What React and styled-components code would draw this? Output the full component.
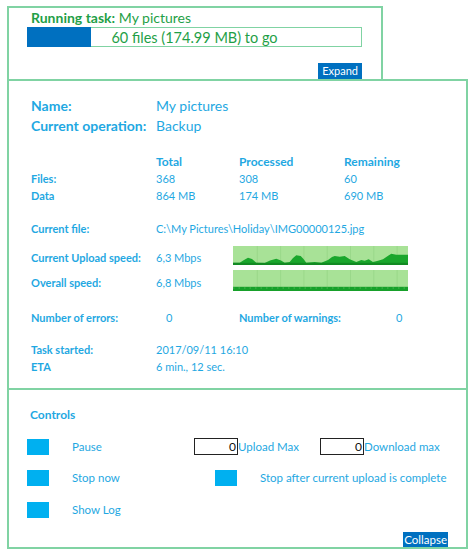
import styled, { createGlobalStyle } from 'styled-components';

const GlobalStyle = createGlobalStyle`
  html, body {
    margin: 0;
    padding: 0;
    background: #ffffff;
  }
  body {
    font-family: Lato, "Liberation Sans", sans-serif;
  }
`;

const GREEN_LINE = '#80d3a3';
const GREEN_TEXT = '#1f9f47';
const BLUE_TEXT = '#1fa8e2';
const DARK_BLUE = '#0070c0';

const Page = styled.div`
  padding: 6px 0 0 7px;
  width: 461px;
`;

/* top "running task" box */
const TaskBox = styled.div`
  box-sizing: border-box;
  width: 376px;
  height: 73px;
  border: 2px solid ${GREEN_LINE};
  border-bottom: none;
  padding: 1px 19px 0 18px;
  display: flex;
  flex-direction: column;
`;
const TaskTitle = styled.div`
  margin-left: 4px;
  font-size: 14px;
  line-height: 17px;
  color: ${GREEN_TEXT};
  > b {
    font-weight: 700;
  }
`;
const ProgressBar = styled.div`
  position: relative;
  box-sizing: border-box;
  margin-top: 1px;
  height: 20px;
  border: 1px solid ${GREEN_LINE};
  display: flex;
  align-items: center;
  justify-content: center;
  font-size: 14.5px;
  color: ${GREEN_TEXT};
`;
const ProgressFill = styled.div`
  position: absolute;
  left: -1px;
  top: -1px;
  bottom: -1px;
  background: ${DARK_BLUE};
`;
const ProgressLabel = styled.span`
  position: relative;
`;
const BlueButton = styled.button`
  margin-top: ${(p) => (p.$top ? `${p.$top}px` : 'auto')};
  align-self: flex-end;
  height: ${(p) => p.$h}px;
  padding: 0 ${(p) => p.$padX}px;
  border: none;
  background: ${DARK_BLUE};
  color: #ffffff;
  font-family: Lato, "Liberation Sans", sans-serif;
  font-size: ${(p) => p.$size}px;
  line-height: ${(p) => p.$h}px;
  cursor: pointer;
`;

/* main info panel */
const Panel = styled.div`
  box-sizing: border-box;
  width: 461px;
  border: 2px solid ${GREEN_LINE};
  border-top: ${(p) => (p.$noTop ? 'none' : `2px solid ${GREEN_LINE}`)};
  padding: ${(p) => p.$pad};
  display: flex;
  flex-direction: column;
  color: ${BLUE_TEXT};
`;

const BigRow = styled.div`
  display: grid;
  grid-template-columns: 125px 1fr;
  font-size: 14px;
  line-height: 20px;
  > b {
    font-weight: 700;
  }
`;

const Section = styled.div`
  margin-top: ${(p) => p.$top}px;
  display: flex;
  flex-direction: column;
`;

const SmallRow = styled.div`
  display: grid;
  grid-template-columns: ${(p) => p.$cols || '125px 83px 105px 1fr'};
  font-size: 11px;
  line-height: 17px;
  > b {
    font-weight: 700;
  }
`;
const HeadRow = styled(SmallRow)`
  font-size: 12px;
  font-weight: 700;
`;

const SpeedRow = styled.div`
  margin-top: ${(p) => p.$top}px;
  display: grid;
  grid-template-columns: 125px 77px 175px;
  align-items: center;
  font-size: 11px;
  line-height: 17px;
  > b {
    font-weight: 700;
    padding-top: 4px;
  }
  > span {
    padding-top: 4px;
  }
`;

const ChartSvg = styled.svg`
  display: block;
`;

function SpeedChart({ height, children }) {
  const lines = [1, 2, 3, 4, 5, 6, 7].map((k) => 1 + k * 23.3);
  return (
    <ChartSvg width="175" height={height} viewBox={`0 0 175 ${height}`}>
      <rect x="0" y="0" width="175" height={height} fill="#a8e297" />
      {lines.map((x) => (
        <line key={x} x1={x} y1="0" x2={x} y2={height} stroke="#97d686" strokeWidth="0.8" />
      ))}
      {children}
    </ChartSvg>
  );
}

const uploadPath =
  'M0 16.7 L6.7 16.7 L11 14 L15 11.7 L19 13 L23.3 16.7 L31.7 17 L37 14.5 L43.3 12.7 L48 14.5 L51.7 16.7 L56.7 16 ' +
  'L60 12 L63.3 9.3 L67.7 10 L70.5 13 L73.3 16.7 L81.7 16 L88.3 16.7 L95 14 L99 11 L101.7 10 L106.7 10.7 L111.7 10 ' +
  'L116.7 13.3 L123.3 16 L128.3 14 L131.7 14.7 L135.7 13.3 L140 16 L145 14.7 L150 13.3 L154 10.5 L158.3 7.7 ' +
  'L163.3 8.7 L175 8.7 L175 19 L0 19 Z';

/* controls */
const ControlsTitle = styled.div`
  margin-left: 3px;
  font-size: 12px;
  font-weight: 700;
  line-height: 17px;
`;
const ControlList = styled.div`
  margin-top: 15px;
  display: flex;
  flex-direction: column;
  gap: 16px;
`;
const ControlRow = styled.div`
  display: grid;
  grid-template-columns: 45px 122px 43px 83px 43px 1fr;
  align-items: center;
  height: 16px;
  font-size: 11.5px;
  line-height: 16px;
`;
const Square = styled.div`
  width: 22px;
  height: 16px;
  background: #00b0f0;
  justify-self: ${(p) => (p.$end ? 'end' : 'start')};
`;
const NumberBox = styled.div`
  box-sizing: border-box;
  width: 44px;
  height: 17px;
  border: 1px solid #222222;
  padding-right: 1px;
  text-align: right;
  color: #111111;
  font-size: 12px;
  line-height: 15px;
`;
const ControlText = styled.span`
  padding-left: ${(p) => p.$indent || 0}px;
  grid-column: ${(p) => p.$span || 'auto'};
  white-space: nowrap;
`;

export default function App() {
  const doneShare = 64 / 335;
  return (
    <>
      <GlobalStyle />
      <Page>
        <TaskBox>
          <TaskTitle>
            <b>Running task:</b> My pictures
          </TaskTitle>
          <ProgressBar>
            <ProgressFill style={{ width: `${doneShare * 100}%` }} />
            <ProgressLabel>60 files (174.99 MB) to go</ProgressLabel>
          </ProgressBar>
          <BlueButton $h={16} $size={11} $padX={4}>Expand</BlueButton>
        </TaskBox>

        <Panel $pad="15px 0 13px 22px">
          <BigRow>
            <b>Name:</b>
            <span>My pictures</span>
          </BigRow>
          <BigRow>
            <b>Current operation:</b>
            <span>Backup</span>
          </BigRow>

          <Section $top={17}>
            <HeadRow>
              <span />
              <span>Total</span>
              <span>Processed</span>
              <span>Remaining</span>
            </HeadRow>
            <SmallRow>
              <b>Files:</b>
              <span>368</span>
              <span>308</span>
              <span>60</span>
            </SmallRow>
            <SmallRow>
              <b>Data</b>
              <span>864 MB</span>
              <span>174 MB</span>
              <span>690 MB</span>
            </SmallRow>
          </Section>

          <Section $top={16}>
            <SmallRow $cols="125px 1fr">
              <b>Current file:</b>
              <span>C:\My Pictures\Holiday\IMG00000125.jpg</span>
            </SmallRow>
          </Section>

          <SpeedRow $top={8}>
            <b>Current Upload speed:</b>
            <span>6,3 Mbps</span>
            <SpeedChart height={19}>
              <path d={uploadPath} fill="#1aa62c" />
              <rect x="0" y="16.8" width="175" height="2.2" fill="#128a22" />
            </SpeedChart>
          </SpeedRow>
          <SpeedRow $top={4}>
            <b>Overall speed:</b>
            <span>6,8 Mbps</span>
            <SpeedChart height={21}>
              <rect x="0" y="16.8" width="175" height="4.2" fill="#17a02a" />
              <line x1="0" y1="18" x2="175" y2="18" stroke="#5cc25a" strokeWidth="0.8" strokeDasharray="1.5 4" />
            </SpeedChart>
          </SpeedRow>

          <Section $top={18}>
            <SmallRow $cols="135px 73px 157px 1fr">
              <b>Number of errors:</b>
              <span>0</span>
              <b>Number of warnings:</b>
              <span>0</span>
            </SmallRow>
          </Section>

          <Section $top={15}>
            <SmallRow $cols="125px 1fr">
              <b>Task started:</b>
              <span>2017/09/11 16:10</span>
            </SmallRow>
            <SmallRow $cols="125px 1fr">
              <b>ETA</b>
              <span>6 min., 12 sec.</span>
            </SmallRow>
          </Section>
        </Panel>

        <Panel $noTop $pad="16px 18px 0 18px">
          <ControlsTitle>Controls</ControlsTitle>
          <ControlList>
            <ControlRow>
              <Square />
              <ControlText>Pause</ControlText>
              <NumberBox>0</NumberBox>
              <ControlText $indent={1}>Upload Max</ControlText>
              <NumberBox>0</NumberBox>
              <ControlText $indent={1}>Download max</ControlText>
            </ControlRow>
            <ControlRow>
              <Square />
              <ControlText>Stop now</ControlText>
              <Square $end />
              <ControlText $indent={23} $span="4 / 7">
                Stop after current upload is complete
              </ControlText>
            </ControlRow>
            <ControlRow>
              <Square />
              <ControlText>Show Log</ControlText>
            </ControlRow>
          </ControlList>
          <BlueButton $top={14} $h={15} $size={11.5} $padX={1}>
            Collapse
          </BlueButton>
        </Panel>
      </Page>
    </>
  );
}
